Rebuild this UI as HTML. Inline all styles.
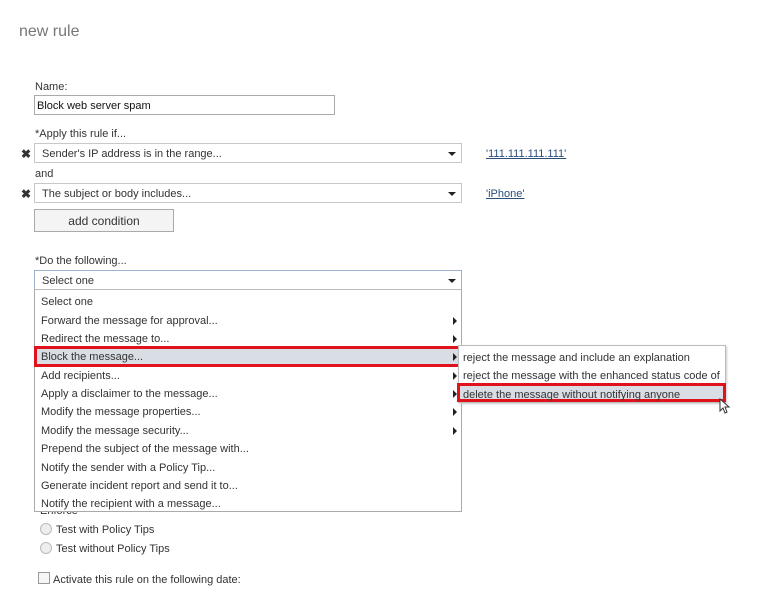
<!DOCTYPE html>
<html><head><style>
body{margin:0;width:768px;height:594px;background:#fff;font-family:"Liberation Sans",sans-serif;font-size:11px;color:#333;position:relative;overflow:hidden}
.a{position:absolute;white-space:nowrap}
.sel{position:absolute;left:34px;width:426px;height:18px;border:1px solid #c8c8c8;background:#fff}
.sel span{position:absolute;left:7px;top:4px}
.arr{position:absolute;right:5px;top:8px;width:0;height:0;border-left:4px solid transparent;border-right:4px solid transparent;border-top:4px solid #222}
.x{position:absolute;left:21px;font-weight:bold;font-size:12px;color:#333}
.item{position:absolute;left:6px;}
.tri{position:absolute;left:418px;width:0;height:0;border-top:4px solid transparent;border-bottom:4px solid transparent;border-left:4px solid #222}
.radio{position:absolute;left:40px;width:10px;height:10px;border:1px solid #bbb;border-radius:50%;background:#eee}
</style></head><body>
<div class="a" style="left:19px;top:23px;font-size:16px;color:#777">new rule</div>
<div class="a" style="left:35px;top:81px">Name:</div>
<div class="a" style="left:34px;top:95px;width:299px;height:18px;border:1px solid #aaa"><span class="a" style="left:2px;top:4px;color:#111">Block web server spam</span></div>
<div class="a" style="left:35px;top:128px">*Apply this rule if...</div>
<div class="x" style="top:147px">✖</div>
<div class="sel" style="top:143px"><span>Sender's IP address is in the range...</span><div class="arr"></div></div>
<div class="a" style="left:486px;top:148px;color:#2b4e7a;text-decoration:underline">'111.111.111.111'</div>
<div class="a" style="left:35px;top:168px">and</div>
<div class="x" style="top:187px">✖</div>
<div class="sel" style="top:183px"><span>The subject or body includes...</span><div class="arr"></div></div>
<div class="a" style="left:486px;top:188px;color:#2b4e7a;text-decoration:underline">'iPhone'</div>
<div class="a" style="left:34px;top:209px;width:138px;height:21px;border:1px solid #aaa;background:#f4f4f4;text-align:center;line-height:22px;font-size:12px">add condition</div>
<div class="a" style="left:35px;top:255px">*Do the following...</div>
<div class="sel" style="top:270px;border-color:#9ab0cc"><span>Select one</span><div class="arr"></div></div>
<div class="a" style="left:40px;top:505px">Enforce</div>
<div class="a" style="left:34px;top:289px;width:426px;height:221px;border:1px solid #aaa;border-top-color:#bbb;background:#fff">
<div class="a" style="left:0;top:56px;width:426px;height:18px;background:#d9dde4"></div>
<div class="a" style="left:-1px;top:56px;width:421px;height:15px;border:3px solid #e0121c"></div>
<div class="item" style="top:6px">Select one</div>
<div class="item" style="top:25px">Forward the message for approval...</div><div class="tri" style="top:27px"></div>
<div class="item" style="top:43px">Redirect the message to...</div><div class="tri" style="top:45px"></div>
<div class="item" style="top:61px">Block the message...</div><div class="tri" style="top:63px"></div>
<div class="item" style="top:80px">Add recipients...</div><div class="tri" style="top:82px"></div>
<div class="item" style="top:98px">Apply a disclaimer to the message...</div><div class="tri" style="top:100px"></div>
<div class="item" style="top:116px">Modify the message properties...</div><div class="tri" style="top:118px"></div>
<div class="item" style="top:135px">Modify the message security...</div><div class="tri" style="top:137px"></div>
<div class="item" style="top:153px">Prepend the subject of the message with...</div>
<div class="item" style="top:172px">Notify the sender with a Policy Tip...</div>
<div class="item" style="top:190px">Generate incident report and send it to...</div>
<div class="item" style="top:208px">Notify the recipient with a message...</div>
</div>
<div class="a" style="left:458px;top:345px;width:266px;height:56px;border:1px solid #bbb;background:#fff;box-shadow:1px 1px 2px #ccc">
<div class="a" style="left:4px;top:6px">reject the message and include an explanation</div>
<div class="a" style="left:4px;top:24px">reject the message with the enhanced status code of</div>
<div class="a" style="left:-1px;top:38px;width:266px;height:18px;background:#d9dde4"></div>
<div class="a" style="left:-2px;top:37px;width:263px;height:13px;border:3px solid #e0121c"></div>
<div class="a" style="left:4px;top:43px">delete the message without notifying anyone</div>
</div>
<svg class="a" style="left:719px;top:398px" width="12" height="16" viewBox="0 0 12 16"><path d="M1 1 L1 13 L4 10 L6 15 L8 14 L6 9 L10 9 Z" fill="#fff" stroke="#333" stroke-width="1"/></svg>
<div class="radio" style="top:523px"></div><div class="a" style="left:56px;top:524px">Test with Policy Tips</div>
<div class="radio" style="top:542px"></div><div class="a" style="left:56px;top:543px">Test without Policy Tips</div>
<div class="a" style="left:38px;top:572px;width:10px;height:10px;border:1px solid #999;background:#f6f6f6"></div>
<div class="a" style="left:53px;top:574px">Activate this rule on the following date:</div>
</body></html>
